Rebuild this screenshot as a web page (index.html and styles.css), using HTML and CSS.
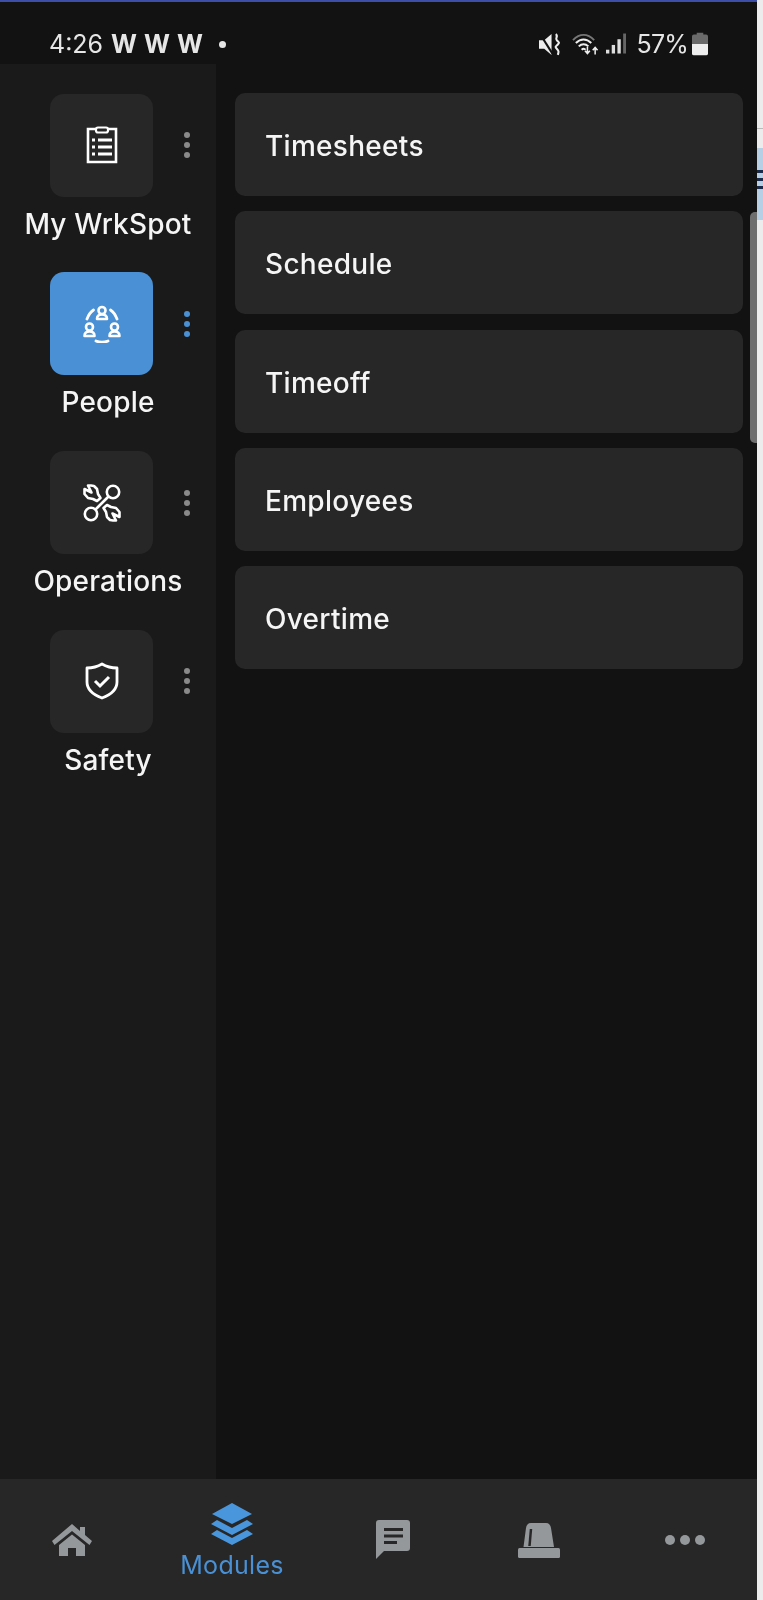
FILE: index.html
```html
<!DOCTYPE html>
<html lang="en">
<head>
<meta charset="utf-8">
<title>Modules</title>
<link rel="stylesheet" href="styles.css">
</head>
<body>
<div class="frame">
  <div class="phone">
    <header class="status">
      <div class="status-left">
        <span class="time">4:26</span>
        <span class="w">W</span><span class="w">W</span><span class="w">W</span>
        <span class="dot-note"></span>
      </div>
      <div class="status-right">
        <svg class="ic-mute" viewBox="0 0 22 22"><path fill="#eee" d="M0 7h5l7-6v20l-7-6H0z"/><path d="M1 1l12 19" stroke="#121212" stroke-width="2"/><path d="M16 1c3 2-1 4 1 6s3 2 1 4-3 2-1 4 2 3 1 6" fill="none" stroke="#eee" stroke-width="2"/></svg>
        <svg class="ic-wifi" viewBox="0 0 28 24"><path d="M1 8c7-7 15-7 22 0" fill="none" stroke="#777" stroke-width="2"/><path d="M4 11c5-5 11-5 16 0M7 14.500c3-3 7-3 10 0M10 18c1.500-1.500 3-1.500 4 0" fill="none" stroke="#eee" stroke-width="2"/><path d="M16 15v6M13.500 19l2.500 3 2.500-3M24 23v-7M21.500 18.500l2.500-3 2.500 3" fill="none" stroke="#eee" stroke-width="1.600"/></svg>
        <svg class="ic-signal" viewBox="0 0 21 22"><rect x="0" y="17" width="3.500" height="4" fill="#ddd"/><rect x="6" y="12" width="3.500" height="9" fill="#ddd"/><rect x="12" y="6" width="3.500" height="15" fill="#ddd"/><rect x="18" y="0" width="3" height="21" fill="#666"/></svg>
        <span class="pct">57%</span>
        <svg class="ic-batt" viewBox="0 0 17 24"><path d="M5 0h7v2h3a2 2 0 0 1 2 2v10H0V4a2 2 0 0 1 2-2h3z" fill="#6a6a6a"/><path d="M0 12h17v10a2 2 0 0 1-2 2H2a2 2 0 0 1-2-2z" fill="#eee"/></svg>
      </div>
    </header>

    <div class="body">
      <nav class="side">
        <div class="mod">
          <div class="mod-top">
            <div class="tile">
              <svg class="tile-ic" viewBox="0 0 32 38"><path d="M10 3H2v33h28V3h-8" fill="none" stroke="#fff" stroke-width="2.600"/><rect x="10" y="1.500" width="12" height="5" rx="2" fill="none" stroke="#fff" stroke-width="2.200"/><path d="M6 14h3M6 21h3M6 28h3M12 14h14M12 21h14M12 28h14" stroke="#fff" stroke-width="2.800"/></svg>
            </div>
            <div class="more"><i></i><i></i><i></i></div>
          </div>
          <div class="label">My WrkSpot</div>
        </div>
        <div class="mod on">
          <div class="mod-top">
            <div class="tile">
              <svg class="tile-ic" viewBox="0 0 38 38"><g fill="none" stroke="#fff" stroke-width="2.600" stroke-linejoin="round"><circle cx="19" cy="5.500" r="3.500"/><path d="M14 14c0-3 2-4.500 5-4.500s5 1.500 5 4.500z"/><circle cx="6.500" cy="22" r="3.500"/><path d="M1.500 31c0-3 2-4.500 5-4.500s5 1.500 5 4.500z"/><circle cx="31.500" cy="22" r="3.500"/><path d="M26.500 31c0-3 2-4.500 5-4.500s5 1.500 5 4.500z"/></g><g fill="none" stroke="#fff" stroke-width="2.800" stroke-linecap="round"><path d="M10.500 5c-3 2-5 5-6.500 9M27.500 5c3 2 5 5 6.500 9M13 36c4 1.500 8 1.500 12 0"/></g></svg>
            </div>
            <div class="more"><i></i><i></i><i></i></div>
          </div>
          <div class="label">People</div>
        </div>
        <div class="mod">
          <div class="mod-top">
            <div class="tile">
              <svg class="tile-ic" viewBox="0 0 38 38"><g fill="none" stroke="#fff" stroke-width="2.600" stroke-linejoin="round"><circle cx="30" cy="8" r="6.200"/><circle cx="8" cy="30" r="6.200"/><path d="M25.500 12.500L12.500 25.500"/><path d="M8 1.500L5 1.500 8.500 8.500 1.500 5 1.500 10 5 14 10 15 14 17 17.500 14 15 10 14 5 11 2z"/><path d="M30 36.500L33 36.500 29.500 29.500 36.500 33 36.500 28 33 24 28 23 24 21 20.500 24 23 28 24 33 27 36z"/></g></svg>
            </div>
            <div class="more"><i></i><i></i><i></i></div>
          </div>
          <div class="label">Operations</div>
        </div>
        <div class="mod">
          <div class="mod-top">
            <div class="tile">
              <svg class="tile-ic" viewBox="0 0 34 38"><path d="M17 2c5 3 9 4 15 4v14c0 8-7 13-15 16C9 33 2 28 2 20V6c6 0 10-1 15-4z" fill="none" stroke="#fff" stroke-width="2.800" stroke-linejoin="round"/><path d="M10 19l5 5 9-9" fill="none" stroke="#fff" stroke-width="3"/></svg>
            </div>
            <div class="more"><i></i><i></i><i></i></div>
          </div>
          <div class="label">Safety</div>
        </div>
      </nav>

      <main class="list">
        <div class="card">Timesheets</div>
        <div class="card">Schedule</div>
        <div class="card">Timeoff</div>
        <div class="card">Employees</div>
        <div class="card">Overtime</div>
      </main>
    </div>

    <footer class="tabs">
      <div class="tab">
        <svg class="ic-home" viewBox="0 0 40 32"><path fill="#94989a" d="M20 0L0 17l2.500 4L20 7l17.500 14 2.500-4-7-6V3h-5v4z"/><path fill="#94989a" d="M7 21L20 10.500 33 21v11H24v-8h-8v8H7z"/></svg>
      </div>
      <div class="tab active">
        <svg class="ic-layers" viewBox="0 0 42 42"><path fill="#4a96dc" d="M21 0l20 11-20 10L1 11z"/><path fill="#4a96dc" d="M6 17l15 8 15-8 6 4-21 11L0 21z"/><path fill="#4a96dc" d="M6 27l15 8 15-8 6 4-21 11L0 31z"/></svg>
        <span class="tab-label">Modules</span>
      </div>
      <div class="tab">
        <svg class="ic-chat" viewBox="0 0 34 39"><path fill="#94989a" d="M3 0h28a3 3 0 0 1 3 3v25a3 3 0 0 1-3 3H8l-8 8V3a3 3 0 0 1 3-3z"/><path d="M8 9.500h19M8 16h19M8 22.500h13" stroke="#272727" stroke-width="3"/></svg>
      </div>
      <div class="tab">
        <svg class="ic-siren" viewBox="0 0 42 36"><path fill="#94989a" d="M5.500 25L8 6c.4-3 2-5 5-5h15c3 0 4.600 2 5 5l3 19z"/><rect x="0" y="26" width="42" height="10" rx="1.500" fill="#94989a"/><path d="M13 7l-1.500 17" stroke="#272727" stroke-width="2.500"/></svg>
      </div>
      <div class="tab">
        <div class="hdots"><i></i><i></i><i></i></div>
      </div>
    </footer>

    <div class="scroll"></div>
  </div>

  <aside class="edge">
    <div class="edge-top"></div>
    <div class="edge-blue"><i></i><i></i><i></i></div>
    <div class="edge-rest"></div>
  </aside>
</div>
</body>
</html>
```
FILE: styles.css
```css
html, body {
  margin: 0;
  padding: 0;
  background: #121212;
}

.frame {
  display: flex;
  width: 763px;
  height: 1600px;
  overflow: hidden;
  font-family: Inter, "Liberation Sans", sans-serif;
  color: #fff;
  filter: blur(.45px);
}

.phone {
  position: relative;
  flex: 0 0 757px;
  display: flex;
  flex-direction: column;
  height: 1600px;
  background: #121212;
}

/* status bar */
.status {
  flex: 0 0 64px;
  box-sizing: border-box;
  border-top: 2px solid #3d4ea8;
  display: flex;
  justify-content: space-between;
  align-items: center;
  padding: 22px 49px 0;
  background: #121212;
  color: #e6e6e6;
}

.status-left {
  display: flex;
  align-items: center;
}

.time {
  font-size: 25px;
  margin-right: 10px;
  width: 52px;
  white-space: nowrap;
}

.w {
  font-size: 25px;
  font-weight: 700;
  width: 33px;
}

.dot-note {
  width: 7px;
  height: 7px;
  border-radius: 50%;
  background: #e6e6e6;
  margin-left: 9px;
}

.status-right {
  display: flex;
  align-items: center;
}

.ic-mute { width: 23px; height: 23px; margin-right: 10px; }
.ic-wifi { width: 27px; height: 24px; margin-right: 7px; }
.ic-signal { width: 20px; height: 22px; margin-right: 11px; }
.pct { font-size: 25px; letter-spacing: -.8px; margin-right: 4px; }
.ic-batt { width: 16px; height: 24px; }

/* body */
.body {
  flex: 1;
  display: flex;
  min-height: 0;
}

.side {
  flex: 0 0 216px;
  box-sizing: border-box;
  background: #1a1a1a;
  padding-top: 29.500px;
  display: flex;
  flex-direction: column;
  gap: 32.800px;
}

.mod {
  display: flex;
  flex-direction: column;
}

.mod-top {
  display: flex;
  align-items: center;
  padding-left: 50px;
}

.tile {
  width: 103px;
  height: 103px;
  border-radius: 14px;
  background: #272727;
  display: flex;
  align-items: center;
  justify-content: center;
}

.tile-ic {
  width: 38px;
  height: 38px;
}

.more {
  display: flex;
  flex-direction: column;
  gap: 4px;
  margin-left: 31px;
}

.more i {
  width: 6px;
  height: 6px;
  border-radius: 50%;
  background: #8a8a8a;
}

.on .tile { background: #4a90d4; }
.on .more i { background: #4a90d4; }

.label {
  margin-top: 11px;
  height: 32px;
  line-height: 32px;
  text-align: center;
  font-size: 28px;
  font-weight: 500;
  letter-spacing: .2px;
  color: #f5f5f5;
}

/* list */
.list {
  flex: 1;
  box-sizing: border-box;
  padding: 29px 14px 0 19px;
  display: flex;
  flex-direction: column;
  gap: 15.300px;
}

.card {
  box-sizing: border-box;
  height: 103px;
  padding: 3px 0 0 30px;
  line-height: 100px;
  border-radius: 10px;
  background: #272727;
  font-size: 28px;
  font-weight: 500;
  letter-spacing: .3px;
  color: #f5f5f5;
}

/* bottom tabs */
.tabs {
  flex: 0 0 121px;
  display: grid;
  grid-template-columns: 143px 178px 144px 147px 145px;
  background: #272727;
}

.tab {
  display: flex;
  flex-direction: column;
  align-items: center;
  justify-content: center;
}

.active {
  padding-top: 4px;
}

.ic-home { width: 40px; height: 32px; }
.ic-layers { width: 42px; height: 42px; }
.ic-chat { width: 34px; height: 39px; }
.ic-siren { width: 42px; height: 36px; }

.tab-label {
  font-size: 25px;
  letter-spacing: .3px;
  line-height: 30px;
  color: #4a90d4;
  margin-top: 5px;
}

.hdots {
  display: flex;
  gap: 5px;
}

.hdots i {
  width: 10px;
  height: 10px;
  border-radius: 50%;
  background: #94989a;
}

/* overlay scrollbar of the window behind */
.scroll {
  position: absolute;
  right: 0;
  top: 212px;
  width: 7px;
  height: 231px;
  border-radius: 5px 0 0 5px;
  background: #6e6e6e;
}

/* sliver of the window behind the phone */
.edge {
  flex: 0 0 6px;
  display: flex;
  flex-direction: column;
  background: #ececec;
}

.edge-top {
  height: 129px;
  border-bottom: 1px solid #bbb;
  box-sizing: border-box;
}

.edge-blue {
  height: 72px;
  background: #b6cfe4;
  margin-top: 19px;
  padding-top: 22px;
  box-sizing: border-box;
  display: flex;
  flex-direction: column;
  gap: 5px;
}

.edge-blue i {
  height: 3px;
  background: #1a2a4a;
}

.edge-rest {
  flex: 1;
}
```
